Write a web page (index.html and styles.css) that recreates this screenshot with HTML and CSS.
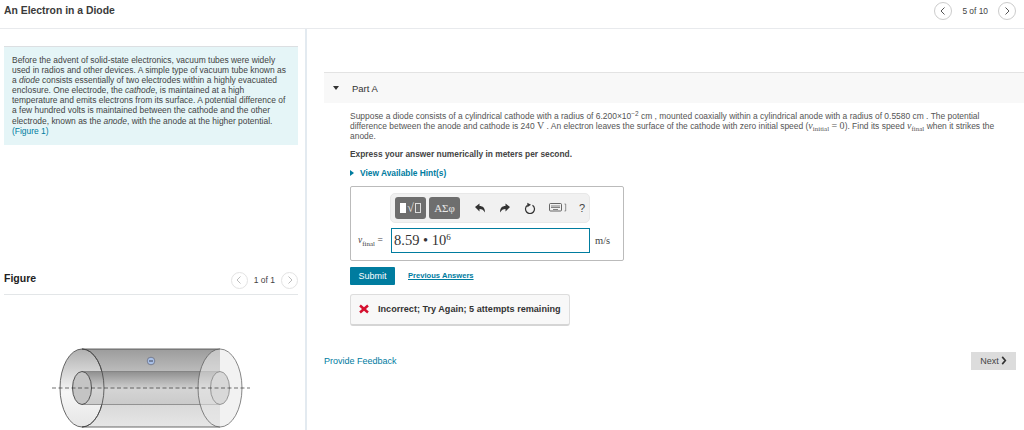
FILE: index.html
```html
<!DOCTYPE html>
<html lang="en">
<head>
<meta charset="utf-8">
<title>An Electron in a Diode</title>
<link rel="stylesheet" href="styles.css">
</head>
<body>
<header class="top">
  <h1 class="title">An Electron in a Diode</h1>
  <div class="pager">
    <span class="circle"><svg viewBox="0 0 10 10" class="chev"><path d="M6.500 1.500 3 5l3.500 3.500"/></svg></span>
    <span class="count">5 of 10</span>
    <span class="circle"><svg viewBox="0 0 10 10" class="chev"><path d="M3.500 1.500 7 5 3.500 8.500"/></svg></span>
  </div>
</header>
<main class="cols">
  <section class="left">
    <div class="intro">Before the advent of solid-state electronics, vacuum tubes were widely used in radios and other devices. A simple type of vacuum tube known as a <i>diode</i> consists essentially of two electrodes within a highly evacuated enclosure. One electrode, the <i>cathode</i>, is maintained at a high temperature and emits electrons from its surface. A potential difference of a few hundred volts is maintained between the cathode and the other electrode, known as the <i>anode</i>, with the anode at the higher potential. <a class="link">(Figure 1)</a></div>
    <div class="fig-head">
      <h2 class="fig-title">Figure</h2>
      <div class="pager small">
        <span class="circle faint"><svg viewBox="0 0 10 10" class="chev"><path d="M6.500 1.500 3 5l3.500 3.500"/></svg></span>
        <span class="count">1 of 1</span>
        <span class="circle faint"><svg viewBox="0 0 10 10" class="chev"><path d="M3.500 1.500 7 5 3.500 8.500"/></svg></span>
      </div>
    </div>
    <svg class="diode" viewBox="0 0 200 82" width="200" height="82">
      <defs>
        <linearGradient id="outer" x1="0" y1="0" x2="0" y2="1">
          <stop offset="0" stop-color="#9c9c9c"/><stop offset=".45" stop-color="#cdcdcd"/><stop offset="1" stop-color="#e6e6e6"/>
        </linearGradient>
        <linearGradient id="inner" x1="0" y1="0" x2="0" y2="1">
          <stop offset="0" stop-color="#8f8f8f"/><stop offset=".55" stop-color="#d4d4d4"/><stop offset="1" stop-color="#cacaca"/>
        </linearGradient>
        <linearGradient id="face" x1="0" y1="0" x2="0" y2="1">
          <stop offset="0" stop-color="#b0b0b0"/><stop offset=".55" stop-color="#f6f6f6"/><stop offset="1" stop-color="#e6e6e6"/>
        </linearGradient>
      </defs>
      <path d="M22 2H160V80H22Z" fill="url(#outer)"/>
      <path d="M22 2a22 39 0 0 0 0 78a22 39 0 0 0 0-78Z" fill="url(#face)" stroke="#444" stroke-width=".8"/>
      <path d="M22 2H160M22 80H160" stroke="#444" stroke-width=".8"/>
      <path d="M22 24.500H160V57.500H22Z" fill="url(#inner)"/>
      <path d="M22 24.500H160M22 57.500H160" stroke="#777" stroke-width=".7"/>
      <ellipse cx="22" cy="41" rx="9.500" ry="16.500" fill="#c4c4c4" stroke="#333" stroke-width=".8"/>
      <path d="M160 2a22 39 0 0 1 0 78a22 39 0 0 1 0-78Z" fill="#e8e8e8" fill-opacity=".55" stroke="#555" stroke-width=".7"/>
      <ellipse cx="160" cy="41" rx="9.500" ry="16.500" fill="#d8d8d8" stroke="#777" stroke-width=".7"/>
      <path d="M22 2a22 39 0 0 1 0 78" fill="none" stroke="#444" stroke-width=".8"/>
      <path d="M-8 41H190" stroke="#333" stroke-width=".7" stroke-dasharray="4 2.500"/>
      <circle cx="91" cy="14" r="3.800" fill="#a9c0e6" stroke="#556" stroke-width=".6"/>
      <path d="M89 14h4" stroke="#223" stroke-width=".8"/>
    </svg>
  </section>
  <section class="right">
    <div class="part-bar"><span class="caret-down"></span><span class="part-name">Part A</span></div>
    <div class="part-body">
      <p class="q">Suppose a diode consists of a cylindrical cathode with a radius of 6.200×10<sup class="sup">−2</sup> cm , mounted coaxially within a cylindrical anode with a radius of 0.5580 cm . The potential difference between the anode and cathode is 240 <span class="math">V</span> . An electron leaves the surface of the cathode with zero initial speed (<i class="math">v</i><sub class="sub">initial</sub> <span class="math">= 0</span>). Find its speed <i class="math">v</i><sub class="sub">final</sub> when it strikes the anode.</p>
      <p class="express">Express your answer numerically in meters per second.</p>
      <div class="hints"><span class="caret-right"></span>View Available Hint(s)</div>
      <div class="answer">
        <div class="toolbar">
          <span class="tool-btn"><span class="tb-block"></span><span class="tb-root">√</span><span class="tb-box"></span></span>
          <span class="tool-btn greek">ΑΣφ</span>
          <span class="tool-icons">
            <svg class="ti" viewBox="0 0 12 12"><path d="M1 5 5.500 1.500V4C9 4 11 6 11 10.500 9.500 8 8 7 5.500 7V9.500Z" fill="#333"/></svg>
            <svg class="ti" viewBox="0 0 12 12"><path d="M11 5 6.500 1.500V4C3 4 1 6 1 10.500 2.500 8 4 7 6.500 7V9.500Z" fill="#333"/></svg>
            <svg class="ti" viewBox="0 0 12 12"><path d="M8.500 3.300A4.500 4.500 0 1 1 3.500 3.300" fill="none" stroke="#333" stroke-width="1.200"/><path d="M3.300 .8 7 2.800 3.300 5.200Z" fill="#333"/></svg>
            <svg class="kb" viewBox="0 0 18 9"><rect x=".5" y=".5" width="12" height="7.500" rx="1" fill="none" stroke="#444" stroke-width=".8"/><path d="M2 3h9M2 4.500h9M4 6.500h5" stroke="#666" stroke-width=".8"/><path d="M15.500 1h1.200v7h-1.200" fill="none" stroke="#666" stroke-width=".7"/></svg>
            <span class="help">?</span>
          </span>
        </div>
        <div class="answer-row">
          <span class="lhs"><i>v</i><sub>final</sub> =</span>
          <div class="input">8.59 • 10<sup>6</sup></div>
          <span class="unit">m/s</span>
        </div>
      </div>
      <div class="actions">
        <button class="submit" type="button">Submit</button>
        <a class="prev">Previous Answers</a>
      </div>
      <div class="feedback">
        <svg class="x" viewBox="0 0 10 10"><path d="M1.800 .6 5 3.300 8.200 .6 9.800 2.400 7 5 9.800 7.600 8.200 9.400 5 6.700 1.800 9.400 .2 7.600 3 5 .2 2.400Z" fill="#d5102f"/></svg>
        <span>Incorrect; Try Again; 5 attempts remaining</span>
      </div>
    </div>
    <div class="foot">
      <a class="provide">Provide Feedback</a>
      <button class="next" type="button">Next <svg class="next-ch" viewBox="0 0 6 10"><path d="M1 1 4.500 5 1 9" fill="none" stroke="#333" stroke-width="1.800"/></svg></button>
    </div>
  </section>
</main>
</body>
</html>
```
FILE: styles.css
```css
* { box-sizing: border-box; }
html, body { margin: 0; padding: 0; }
body {
  width: 1024px; height: 430px; overflow: hidden; background: #fff;
  font-family: "Liberation Sans", Arial, sans-serif; color: #333;
}
.top {
  height: 29px; display: flex; align-items: center; justify-content: space-between;
  padding: 0 8px 6px 4px; border-bottom: 1px solid #e8eaed;
}
.title { margin: 0; font-size: 10.400px; font-weight: 700; color: #3a3a3a; line-height: 14px; }
.pager { display: flex; align-items: center; gap: 10px; font-size: 8.400px; color: #444; }
.circle {
  width: 18px; height: 18px; border: 1px solid #ccc; border-radius: 50%;
  display: flex; align-items: center; justify-content: center; background: #fff;
}
.chev { width: 10px; height: 10px; fill: none; stroke: #555; stroke-width: 1; }
.circle.faint .chev { stroke: #bbb; }
.circle.faint { border-color: #e3e3e3; }
.cols { display: flex; height: 401px; }
.left { width: 307px; padding: 17px 7px 0 4px; border-right: 2px solid #e3eaf0; overflow: hidden; }
.intro {
  height: 99px; background: #e5f5f7; border-top: 1px solid #dcdfe2;
  padding: 8px 8px 0 8px; font-size: 8.450px; line-height: 10.100px; color: #444;
}
.link { color: #007c9f; }
.fig-head {
  margin-top: 123px; height: 27px; display: flex; justify-content: space-between; align-items: center;
  border-bottom: 1px solid #e3e6e8; padding-bottom: 2px;
}
.fig-title { margin: 0 0 4px; font-size: 10.500px; font-weight: 700; color: #222; }
.pager.small { gap: 6px; font-size: 8.500px; }
.small .circle { width: 17px; height: 17px; }
.diode { display: block; margin: 52px 0 0 56px; overflow: visible; }
.right { flex: 1; padding: 43px 0 0 17px; }
.part-bar {
  height: 31px; background: #f8f8f8; border-top: 1px solid #e3e3e3;
  display: flex; align-items: center; padding-left: 9px;
}
.caret-down { width: 0; height: 0; border: 3.500px solid transparent; border-top: 4px solid #333; border-bottom: 0; margin-right: 13px; }
.part-name { font-size: 9.500px; color: #333; }
.part-body { padding: 8px 0 0 26px; }
.q { margin: 0; width: 660px; font-size: 8.450px; line-height: 10.200px; color: #555; }
.math { font-family: "Liberation Serif", serif; font-size: 10px; }
.sup { font-size: 6.500px; line-height: 0; vertical-align: 3px; }
.sub { font-size: 7px; line-height: 0; vertical-align: -2px; font-family: "Liberation Serif", serif; }
.express { margin: 7px 0 0; font-size: 8.400px; font-weight: 700; line-height: 11px; color: #444; }
.hints { margin-top: 8px; display: flex; align-items: center; font-size: 8.400px; font-weight: 700; color: #007c9f; line-height: 11px; }
.caret-right { width: 0; height: 0; border: 3.500px solid transparent; border-left: 4px solid #007c9f; border-right: 0; margin-right: 6px; }
.answer { margin-top: 7px; width: 274px; height: 75px; border: 1px solid #bbb; border-radius: 2px; padding: 6px 0 0 7px; }
.toolbar {
  margin-left: 32px; width: 200px; height: 30px; background: #f1f1f1; border: 1px solid #e8e8e8; border-radius: 5px;
  display: flex; align-items: center; padding-left: 4px; gap: 3px;
}
.tool-btn {
  width: 31px; height: 22px; background: #6e6e6e; border-radius: 3px; color: #e8e8e8;
  display: flex; align-items: center; justify-content: center; font-family: "Liberation Serif", serif; font-size: 11px; gap: 1px;
}
.tb-block { width: 6px; height: 10px; background: #fff; }
.tb-root { font-size: 12px; line-height: 10px; }
.tb-box { width: 6px; height: 10px; border: 1px solid #ddd; }
.tool-icons { display: flex; align-items: center; margin-left: 11px; gap: 13px; }
.ti { width: 12px; height: 12px; }
.kb { width: 18px; height: 9px; margin-left: 0; }
.help { font-size: 11px; color: #444; margin-left: -1px; }
.answer-row { margin-top: 5px; display: flex; align-items: center; }
.lhs { width: 33px; font-family: "Liberation Serif", serif; font-size: 9.500px; color: #444; white-space: nowrap; }
.lhs sub { font-size: 7px; line-height: 0; }
.input {
  width: 199px; height: 25px; border: 1px solid #007c9f; padding-left: 2px;
  font-family: "Liberation Serif", serif; font-size: 14.500px; line-height: 23px; color: #333;
}
.input sup { font-size: 9px; line-height: 0; vertical-align: 5px; }
.unit { margin-left: 5px; font-family: "Liberation Serif", serif; font-size: 10.500px; color: #444; }
.actions { margin-top: 6px; display: flex; align-items: center; gap: 13px; }
.submit {
  width: 45px; height: 18px; background: #007c9f; color: #fff; border: 0; border-radius: 1px; padding: 0;
  font: 9px "Liberation Sans", sans-serif;
}
.prev { font-size: 7.600px; font-weight: 700; color: #007c9f; text-decoration: underline; margin-bottom: 1px; }
.feedback {
  margin-top: 9px; width: 220px; height: 32px; display: flex; align-items: center; gap: 9px; padding-left: 8px;
  background: #f8f8f8; border: 1px solid #ddd; border-bottom: 2px solid #d5d5d5; border-radius: 3px;
  font-size: 9.100px; font-weight: 700; color: #333; white-space: nowrap;
}
.x { width: 10px; height: 10px; flex: none; }
.foot { margin-top: 26px; display: flex; align-items: center; justify-content: space-between; padding-right: 8px; }
.provide { font-size: 9px; color: #007c9f; }
.next {
  width: 45px; height: 18px; background: #dcdcdc; color: #444; border: 0; padding: 0;
  font: 9px "Liberation Sans", sans-serif; display: flex; align-items: center; justify-content: center; gap: 2px;
}
.next-ch { width: 6px; height: 9px; }
```
